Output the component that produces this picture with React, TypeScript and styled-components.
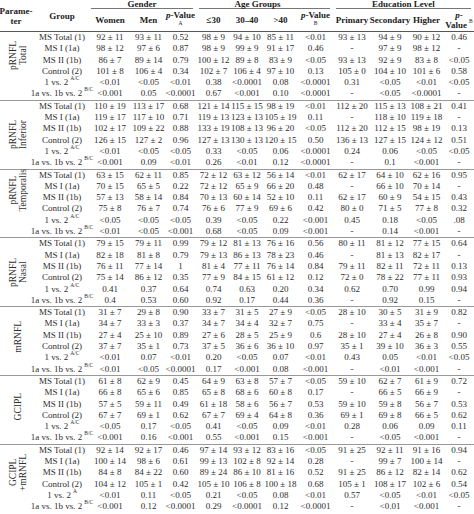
import React from 'react'
import styled, { createGlobalStyle } from 'styled-components'

const GlobalStyle = createGlobalStyle`
  html, body {
    margin: 0;
    padding: 0;
    background: #fff;
  }
  body {
    font-family: 'Liberation Serif', 'Times New Roman', serif;
    color: #2e2e2e;
  }
`

const COLS = '36px 52px 44px 33px 31px 35px 32px 35px 35px 38px 38px 35px 30px'

const Page = styled.div`
  width: 474px;
  height: 514px;
  overflow: hidden;
`

const Head = styled.div`
  display: grid;
  grid-template-columns: ${COLS};
  grid-template-rows: 9px 22px;
  border-bottom: 1.5px solid #555;
  font-weight: bold;
  color: #222;
  font-size: 9px;
  line-height: 10px;
`

const HeadCell = styled.div<{ $col: string; $row: string; $shift?: number; $rule?: boolean }>`
  grid-column: ${p => p.$col};
  grid-row: ${p => p.$row};
  display: flex;
  align-items: center;
  justify-content: center;
  text-align: center;
  white-space: nowrap;
  padding-right: ${p => p.$shift ?? 0}px;
  ${p => p.$rule && 'margin: 0 3px; border-bottom: 1px solid #777; line-height: 8px;'}
`

const Sup = styled.sup`
  font-size: 5.5px;
  line-height: 0;
  vertical-align: top;
  position: relative;
  top: 1px;
  margin-left: 2px;
  font-weight: normal;
`

const HeadSup = styled(Sup)`
  top: 3px;
  margin-left: 0;
`

const Section = styled.div`
  display: grid;
  grid-template-columns: ${COLS};
  grid-auto-rows: 11.3px;
  font-size: 9px;
  line-height: 11.3px;

  & + & {
    border-top: 1px solid #999;
  }
`

const Param = styled.div<{ $lift: number }>`
  grid-column: 1;
  grid-row: 1 / span 6;
  display: flex;
  align-items: center;
  justify-content: center;
  padding-bottom: ${p => p.$lift}px;
`

const ParamText = styled.span`
  writing-mode: vertical-rl;
  transform: rotate(180deg);
  font-size: 9.5px;
  line-height: 10px;
  text-align: center;
  white-space: nowrap;
`

const Cell = styled.div`
  display: flex;
  justify-content: center;
  white-space: nowrap;
`

const PV = () => <><i>p</i>-Value</>

type Group = { label: string[]; lift: number; last?: string; rows: string[] }

const groups: Group[] = [
  {
    label: ['pRNFL', 'Total'], lift: 20,
    rows: [
      '92 ± 11|93 ± 11|0.52|98 ± 9|94 ± 10|85 ± 11|<0.01|93 ± 13|94 ± 9|90 ± 12|0.46',
      '98 ± 12|97 ± 6|0.87|98 ± 9|99 ± 9|91 ± 17|0.46|-|97 ± 9|98 ± 12|-',
      '86 ± 7|89 ± 14|0.79|100 ± 12|89 ± 8|83 ± 9|<0.05|93 ± 13|92 ± 9|83 ± 8|<0.05',
      '101 ± 8|106 ± 4|0.34|102 ± 7|106 ± 4|97 ± 10|0.13|105 ± 0|104 ± 10|101 ± 6|0.58',
      '<0.01|<0.05|<0.01|0.38|<0.0001|0.08|<0.0001|0.31|<0.05|<0.01|<0.05',
      '<0.001|0.05|<0.0001|0.67|<0.001|0.10|<0.0001|-|<0.05|<0.0001|-',
    ],
  },
  {
    label: ['pRNFL', 'Inferior'], lift: 0,
    rows: [
      '110 ± 19|113 ± 17|0.68|121 ± 14|115 ± 15|98 ± 19|<0.01|112 ± 20|115 ± 13|108 ± 21|0.41',
      '119 ± 17|117 ± 10|0.71|119 ± 13|123 ± 13|105 ± 19|0.11|-|118 ± 10|119 ± 18|-',
      '102 ± 17|109 ± 22|0.88|133 ± 19|108 ± 13|96 ± 20|<0.05|112 ± 20|112 ± 15|98 ± 19|0.13',
      '126 ± 15|127 ± 2|0.96|127 ± 13|130 ± 13|120 ± 15|0.50|136 ± 13|127 ± 15|124 ± 12|0.51',
      '<0.01|<0.05|<0.05|0.33|<0.05|0.06|<0.0001|0.24|0.06|<0.05|<0.05',
      '<0.001|0.09|<0.01|0.26|<0.01|0.12|<0.0001|-|0.1|<0.001|-',
    ],
  },
  {
    label: ['pRNFL', 'Temporalis'], lift: 26,
    rows: [
      '63 ± 15|62 ± 11|0.85|72 ± 12|63 ± 12|56 ± 14|<0.01|62 ± 17|64 ± 10|62 ± 16|0.95',
      '70 ± 15|65 ± 5|0.22|72 ± 12|65 ± 9|66 ± 20|0.48|-|66 ± 10|70 ± 14|-',
      '57 ± 13|58 ± 14|0.84|70 ± 13|60 ± 14|52 ± 10|0.11|62 ± 17|60 ± 9|54 ± 15|0.43',
      '75 ± 8|76 ± 7|0.74|76 ± 6|77 ± 9|69 ± 6|0.42|80 ± 0|71 ± 5|77 ± 8|0.32',
      '<0.05|<0.05|<0.05|0.39|<0.05|0.22|<0.001|0.45|0.18|<0.05|.08',
      '<0.01|<0.05|<0.001|0.68|<0.05|0.09|<0.001|-|0.14|<0.001|-',
    ],
  },
  {
    label: ['pRNFL', 'Nasal'], lift: 0,
    rows: [
      '79 ± 15|79 ± 11|0.99|79 ± 12|81 ± 13|76 ± 16|0.56|80 ± 11|81 ± 12|77 ± 15|0.64',
      '82 ± 18|81 ± 8|0.79|79 ± 13|86 ± 13|78 ± 23|0.46|-|81 ± 13|82 ± 17|-',
      '76 ± 11|77 ± 14|1|81 ± 4|77 ± 11|76 ± 14|0.84|79 ± 11|82 ± 11|72 ± 11|0.13',
      '75 ± 14|86 ± 12|0.35|77 ± 9|84 ± 15|61 ± 12|0.12|72 ± 0|78 ± 22|77 ± 11|0.93',
      '0.41|0.37|0.64|0.74|0.63|0.20|0.34|0.62|0.70|0.99|0.94',
      '0.4|0.53|0.60|0.92|0.17|0.44|0.36|-|0.92|0.15|-',
    ],
  },
  {
    label: ['mRNFL'], lift: 8,
    rows: [
      '31 ± 7|29 ± 8|0.90|33 ± 7|31 ± 5|27 ± 9|<0.05|28 ± 10|30 ± 5|31 ± 9|0.82',
      '34 ± 7|33 ± 3|0.37|34 ± 7|34 ± 4|32 ± 7|0.75|-|33 ± 4|35 ± 7|-',
      '27 ± 4|25 ± 10|0.89|27 ± 6|28 ± 5|25 ± 9|0.6|28 ± 10|27 ± 4|26 ± 8|0.90',
      '37 ± 7|35 ± 1|0.73|37 ± 5|36 ± 6|36 ± 10|0.97|35 ± 1|39 ± 10|36 ± 3|0.55',
      '<0.01|0.07|<0.01|0.20|<0.05|0.07|<0.01|0.43|0.05|<0.01|<0.05',
      '<0.01|<0.05|<0.0001|0.17|<0.001|0.08|<0.001|-|<0.01|<0.001|-',
    ],
  },
  {
    label: ['GCIPL'], lift: 6,
    rows: [
      '61 ± 8|62 ± 9|0.45|64 ± 9|63 ± 8|57 ± 7|<0.05|59 ± 10|62 ± 7|61 ± 9|0.72',
      '66 ± 8|65 ± 6|0.85|65 ± 8|68 ± 6|60 ± 8|0.17|-|66 ± 5|66 ± 9|-',
      '57 ± 5|59 ± 11|0.49|61 ± 18|58 ± 6|56 ± 7|0.53|59 ± 10|59 ± 8|56 ± 7|0.53',
      '67 ± 7|69 ± 1|0.62|67 ± 7|69 ± 4|64 ± 8|0.36|69 ± 1|69 ± 8|66 ± 5|0.62',
      '<0.05|0.17|<0.05|0.41|<0.05|0.09|<0.01|0.28|0.06|0.09|0.11',
      '<0.001|0.16|<0.001|0.55|<0.001|0.15|<0.001|-|<0.05|<0.001|-',
    ],
  },
  {
    label: ['GCIPL', '+mRNFL'], lift: 12, last: 'A',
    rows: [
      '92 ± 14|92 ± 17|0.46|97 ± 14|93 ± 12|83 ± 16|<0.05|91 ± 25|92 ± 11|91 ± 16|0.94',
      '100 ± 14|98 ± 6|0.61|99 ± 13|102 ± 8|92 ± 14|0.28|-|99 ± 7|100 ± 14|-',
      '84 ± 8|84 ± 22|0.60|89 ± 24|86 ± 10|81 ± 16|0.52|91 ± 25|86 ± 12|82 ± 14|0.62',
      '104 ± 12|105 ± 1|0.42|105 ± 10|106 ± 8|100 ± 18|0.68|105 ± 1|108 ± 17|102 ± 6|0.54',
      '<0.01|0.11|<0.05|0.21|<0.05|0.08|<0.01|0.57|<0.05|<0.01|<0.05',
      '<0.001|0.12|<0.0001|0.29|<0.0001|0.12|<0.0001|-|<0.01|<0.001|-',
    ],
  },
]

const groupNames = (g: Group) => [
  <>MS Total (1)</>,
  <>MS I (1a)</>,
  <>MS II (1b)</>,
  <>Control (2)</>,
  <>1 vs. 2<Sup>{g.last ?? 'A/C'}</Sup></>,
  <>1a vs. 1b vs. 2<Sup>B/C</Sup></>,
]

export default function App() {
  return (
    <Page>
      <GlobalStyle />
      <Head>
        <HeadCell $col="1" $row="1 / 3" $shift={4}>Parame-<br />ter</HeadCell>
        <HeadCell $col="2" $row="1 / 3">Group</HeadCell>
        <HeadCell $col="3 / 6" $row="1" $rule>Gender</HeadCell>
        <HeadCell $col="6 / 10" $row="1" $rule $shift={14}>Age Groups</HeadCell>
        <HeadCell $col="10 / 14" $row="1" $rule>Education Level</HeadCell>
        <HeadCell $col="3" $row="2">Women</HeadCell>
        <HeadCell $col="4" $row="2">Men</HeadCell>
        <HeadCell $col="5" $row="2"><span><PV /><br /><HeadSup>A</HeadSup></span></HeadCell>
        <HeadCell $col="6" $row="2">≤30</HeadCell>
        <HeadCell $col="7" $row="2">30–40</HeadCell>
        <HeadCell $col="8" $row="2">&gt;40</HeadCell>
        <HeadCell $col="9" $row="2"><span><PV /><br /><HeadSup>B</HeadSup></span></HeadCell>
        <HeadCell $col="10" $row="2">Primary</HeadCell>
        <HeadCell $col="11" $row="2">Secondary</HeadCell>
        <HeadCell $col="12" $row="2">Higher</HeadCell>
        <HeadCell $col="13" $row="2"><span><i>p</i>-<br />Value<Sup>B</Sup></span></HeadCell>
      </Head>
      {groups.map((g, gi) => {
        const names = groupNames(g)
        return (
          <Section key={gi}>
            <Param $lift={g.lift}>
              <ParamText>
                {g.label.map((l, i) => (
                  <React.Fragment key={i}>{i > 0 && <br />}{l}</React.Fragment>
                ))}
              </ParamText>
            </Param>
            {g.rows.map((r, ri) => (
              <React.Fragment key={ri}>
                <Cell>{names[ri]}</Cell>
                {r.split('|').map((v, vi) => (
                  <Cell key={vi}>{v}</Cell>
                ))}
              </React.Fragment>
            ))}
          </Section>
        )
      })}
    </Page>
  )
}
